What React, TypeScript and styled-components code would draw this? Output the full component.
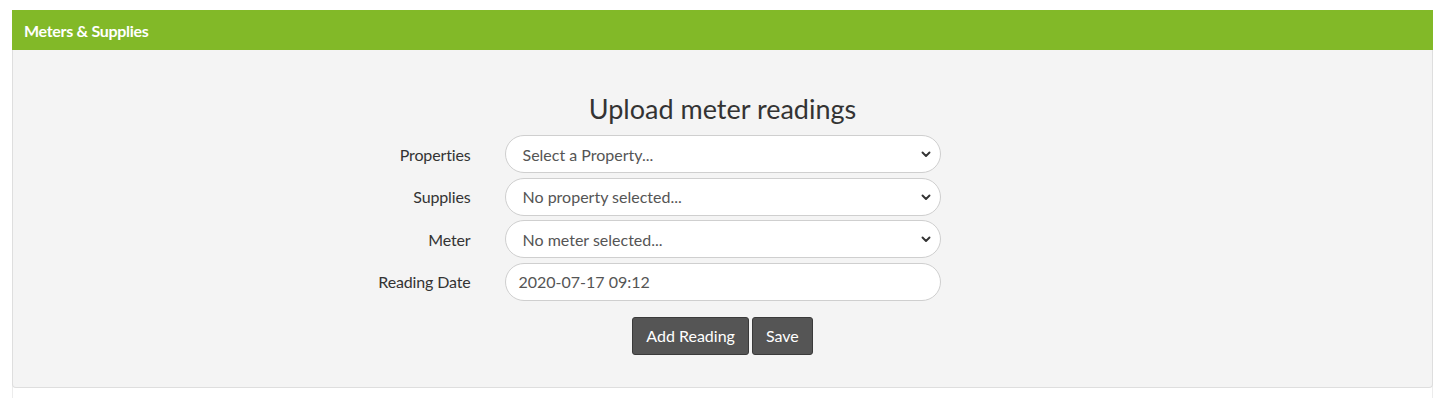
import React from "react";
import styled, { createGlobalStyle } from "styled-components";

const Global = createGlobalStyle`
  html, body { margin: 0; padding: 0; background: #fff; }
  body { font-family: Lato, "Open Sans", Arial, sans-serif; color: #333; }
  * { box-sizing: border-box; }
`;

const Page = styled.div`
  padding: 10px 13px 0 12px;
  height: 398px;
`;

const Frame = styled.div`
  height: 100%;
  border-left: 1px solid #ececec;
  border-right: 1px solid #ececec;
`;

const Panel = styled.section`
  border-radius: 0 0 4px 4px;
  margin: 0 -1px;
`;

const Header = styled.div`
  background: #82b928;
  height: 40px;
  display: flex;
  align-items: center;
  padding: 0 12px;
  color: #fff;
  font-weight: 700;
  font-size: 16px;
  letter-spacing: -0.3px;
`;

const Body = styled.div`
  background: #f4f4f4;
  border: 1px solid #dedede;
  border-top: none;
  border-radius: 0 0 4px 4px;
  height: 338px;
  padding-top: 43px;
`;

const Title = styled.h2`
  margin: 0 0 10px;
  text-align: center;
  font-weight: 400;
  font-size: 27px;
  line-height: 32px;
  color: #333;
`;

const Form = styled.div`
  display: grid;
  grid-template-columns: 1fr 436px 1fr;
  row-gap: 4.5px;
  align-items: center;
`;

const Label = styled.label`
  grid-column: 1;
  justify-self: end;
  padding-right: 34px;
  font-size: 16px;
  letter-spacing: -0.15px;
  color: #333;
`;

const Field = styled.div<{ $pad: number }>`
  grid-column: 2;
  position: relative;
  height: 38px;
  background: #fff;
  border: 1px solid #cfcfcf;
  border-radius: 19px;
  display: flex;
  align-items: center;
  padding: 0 ${(p) => p.$pad}px;
  font-size: 16px;
  color: #555;
`;

const Chevron = styled.svg`
  position: absolute;
  right: 8px;
  top: 50%;
  transform: translateY(-50%);
`;

const Actions = styled.div`
  display: flex;
  justify-content: center;
  gap: 3px;
  margin-top: 16px;
`;

const Button = styled.button`
  height: 38px;
  padding: 0 13px;
  background: #555;
  border: 1px solid #3a3a3a;
  border-radius: 3px;
  color: #fff;
  font-family: Lato, Arial, sans-serif;
  font-size: 16px;
`;

const Arrow = () => (
  <Chevron width="12" height="12" viewBox="0 0 12 12">
    <path d="M2.5 4.5 L6 8 L9.5 4.5" fill="none" stroke="#333" strokeWidth="1.9" strokeLinecap="round" strokeLinejoin="round" />
  </Chevron>
);

const rows: { label: string; value: string; select: boolean }[] = [
  { label: "Properties", value: "Select a Property...", select: true },
  { label: "Supplies", value: "No property selected...", select: true },
  { label: "Meter", value: "No meter selected...", select: true },
  { label: "Reading Date", value: "2020-07-17 09:12", select: false },
];

export default function App() {
  return (
    <>
      <Global />
      <Page>
        <Frame>
          <Panel>
            <Header>Meters &amp; Supplies</Header>
            <Body>
              <Title>Upload meter readings</Title>
              <Form>
                {rows.map((r) => (
                  <React.Fragment key={r.label}>
                    <Label>{r.label}</Label>
                    <Field $pad={r.select ? 17 : 13}>
                      {r.value}
                      {r.select && <Arrow />}
                    </Field>
                  </React.Fragment>
                ))}
              </Form>
              <Actions>
                <Button>Add Reading</Button>
                <Button>Save</Button>
              </Actions>
            </Body>
          </Panel>
        </Frame>
      </Page>
    </>
  );
}
